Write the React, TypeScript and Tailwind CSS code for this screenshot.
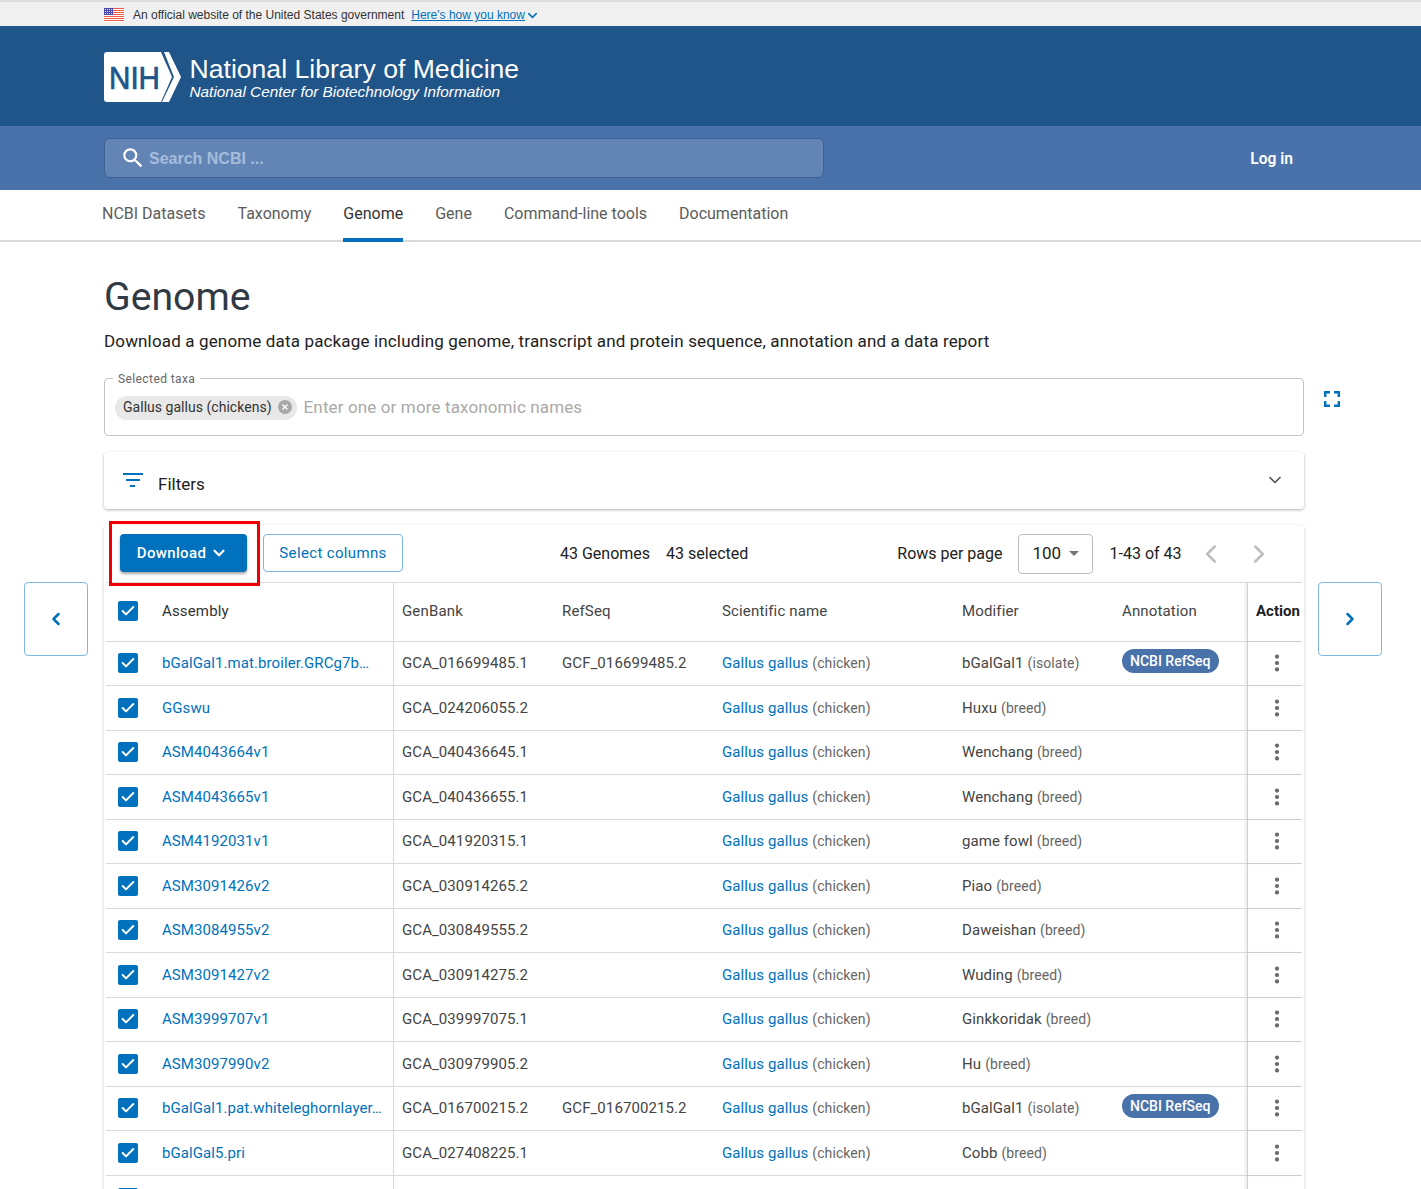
import { ChevronDown, ChevronLeft, ChevronRight, EllipsisVertical, Check } from "lucide-react";

const rows = [
  ["bGalGal1.mat.broiler.GRCg7b…", "GCA_016699485.1", "GCF_016699485.2", "bGalGal1", "(isolate)", true],
  ["GGswu", "GCA_024206055.2", "", "Huxu", "(breed)", false],
  ["ASM4043664v1", "GCA_040436645.1", "", "Wenchang", "(breed)", false],
  ["ASM4043665v1", "GCA_040436655.1", "", "Wenchang", "(breed)", false],
  ["ASM4192031v1", "GCA_041920315.1", "", "game fowl", "(breed)", false],
  ["ASM3091426v2", "GCA_030914265.2", "", "Piao", "(breed)", false],
  ["ASM3084955v2", "GCA_030849555.2", "", "Daweishan", "(breed)", false],
  ["ASM3091427v2", "GCA_030914275.2", "", "Wuding", "(breed)", false],
  ["ASM3999707v1", "GCA_039997075.1", "", "Ginkkoridak", "(breed)", false],
  ["ASM3097990v2", "GCA_030979905.2", "", "Hu", "(breed)", false],
  ["bGalGal1.pat.whiteleghornlayer…", "GCA_016700215.2", "GCF_016700215.2", "bGalGal1", "(isolate)", true],
  ["bGalGal5.pri", "GCA_027408225.1", "", "Cobb", "(breed)", false],
] as const;

const gridCols = "grid grid-cols-[288px_160px_160px_240px_160px_133px_1fr]";

function Box() {
  return (
    <span className="flex h-5 w-5 shrink-0 items-center justify-center rounded-[2px] bg-[#0071bc]">
      <Check size={16} strokeWidth={3} className="text-white" />
    </span>
  );
}

function NihLogo() {
  return (
    <svg width="78" height="50" viewBox="0 0 78 50" className="shrink-0">
      <path d="M3 0H57L68 25L57 50H3Q0 50 0 47V3Q0 0 3 0Z" fill="#fff" />
      <path d="M60 0H65L77 25L65 50H58L70 25Z" fill="#fff" />
      <text x="5" y="37" fontFamily="Liberation Sans, sans-serif" fontSize="31" fill="#20558a" stroke="#20558a" strokeWidth="0.7" textLength="51" lengthAdjust="spacingAndGlyphs">NIH</text>
    </svg>
  );
}

function Flag() {
  return (
    <svg width="20" height="14" viewBox="0 0 20 14">
      <rect width="20" height="14" fill="#fff" />
      {[0, 2, 4, 6, 8, 10, 12].map((y) => (
        <rect key={y} y={y} width="20" height="1" fill="#ee5a45" />
      ))}
      <rect width="9" height="7" fill="#4a4aa8" />
      {[1, 3, 5, 7].map((x) =>
        [1, 3, 5].map((y) => <rect key={`${x}-${y}`} x={x} y={y} width="1" height="1" fill="#d5d5ee" />)
      )}
    </svg>
  );
}

export default function App() {
  return (
    <div className="h-[1189px] w-[1421px] overflow-hidden bg-white font-['Roboto',sans-serif] text-[#212121]">
      <div className="flex h-[26px] items-center border-t-2 border-[#dcdcdc] bg-[#f0f0f0] pl-[104px] pt-[2px] font-['Liberation_Sans',sans-serif] text-xs">
        <Flag />
        <span className="ml-[9px] text-[#333]">An official website of the United States government</span>
        <a className="ml-[7px] text-[#0071bc] underline">Here's how you know</a>
        <ChevronDown size={15} strokeWidth={2.4} className="text-[#0071bc]" />
      </div>

      <header className="flex h-[100px] items-center gap-2 bg-[#20558a] pl-[104px] pt-[1px]">
        <NihLogo />
        <div className="-ml-[0.5px] text-white">
          <div className="font-['Liberation_Sans',sans-serif] text-[26.6px] leading-[30px]">National Library of Medicine</div>
          <div className="-mt-[1px] font-['Liberation_Sans',sans-serif] text-[15.35px] italic leading-[17px]">National Center for Biotechnology Information</div>
        </div>
      </header>

      <div className="flex h-16 items-center justify-between bg-[#4a72aa] pl-[104px] pr-[128px]">
        <div className="flex h-10 w-[720px] items-center gap-[3px] rounded-md border border-[#3d6393] bg-[#6285b5] pl-[15px] font-['Liberation_Sans',sans-serif]">
          <svg width="26" height="26" viewBox="0 0 24 24" fill="#fff">
            <path d="M15.5 14h-.79l-.28-.27A6.471 6.471 0 0 0 16 9.5 6.5 6.5 0 1 0 9.5 16c1.61 0 3.09-.59 4.23-1.57l.27.28v.79l5 4.99L20.49 19l-4.99-5zm-6 0C7.01 14 5 11.99 5 9.5S7.01 5 9.5 5 14 7.01 14 9.5 11.99 14 9.5 14z" />
          </svg>
          <span className="pt-[1px] text-base font-bold text-[#a5bcdb]">Search NCBI ...</span>
        </div>
        <span className="pt-[3px] text-[15.6px] font-semibold text-white">Log in</span>
      </div>

      <nav className="flex h-[52px] gap-8 border-b-2 border-[#d9d9d9] pl-[102px] text-base text-[#5c5c5c]">
        <a className="pt-[12px]">NCBI Datasets</a>
        <a className="pt-[12px]">Taxonomy</a>
        <a className="-mb-[2px] border-b-4 border-[#0071bc] pt-[12px] text-[#333]">Genome</a>
        <a className="pt-[12px]">Gene</a>
        <a className="pt-[12px]">Command-line tools</a>
        <a className="pt-[12px]">Documentation</a>
      </nav>

      <main className="flex">
        <div className="w-[104px] pl-6 pt-[340px]">
          <button className="flex h-[74px] w-16 items-center justify-center rounded-[4px] border border-[#7db8e0] text-[#0071bc]">
            <ChevronLeft size={20} strokeWidth={3} />
          </button>
        </div>

        <div className="w-[1200px]">
          <h1 className="pt-[31px] text-[39.2px] leading-[48px] text-[#2f3a45]">Genome</h1>
          <p className="mt-[8px] text-[17px] leading-[24px] tracking-[0.15px]">Download a genome data package including genome, transcript and protein sequence, annotation and a data report</p>

          <fieldset className="mt-[18px] h-[65px] rounded-[4px] border border-[#c4c4c4] pl-[10px]">
            <legend className="-ml-[2px] px-[5px] pt-[2px] text-xs leading-3 tracking-[0.4px] text-[#666]">Selected taxa</legend>
            <div className="mt-[10px] flex items-center gap-[7px]">
              <span className="flex h-6 items-center gap-[6px] rounded-full bg-[#e8e8e8] pb-[1px] pl-2 pr-[5px] text-sm tracking-[0.03px] text-[#333]">
                Gallus gallus (chickens)
                <svg width="14" height="14" viewBox="0 0 14 14">
                  <circle cx="7" cy="7" r="7" fill="#a8a8a8" />
                  <path d="M4.5 4.5L9.5 9.5M9.5 4.5L4.5 9.5" stroke="#fff" strokeWidth="1.4" />
                </svg>
              </span>
              <span className="text-[17px] tracking-[0.13px] text-[#a9a9a9]">Enter one or more taxonomic names</span>
            </div>
          </fieldset>

          <div className="mt-4 flex h-[57px] items-center rounded-[4px] pl-[19px] pr-[19px] shadow-[0_1px_3px_rgba(0,0,0,0.3)]">
            <svg width="20" height="14" viewBox="0 0 20 14" className="mb-[2px]">
              <rect width="20" height="2" fill="#0071bc" />
              <rect x="3" y="6" width="14" height="2" fill="#0071bc" />
              <rect x="7" y="12" width="5" height="2" fill="#0071bc" />
            </svg>
            <span className="ml-[15px] mt-[8px] flex-1 text-[17px]">Filters</span>
            <ChevronDown size={20} className="mb-[2px] text-[#555]" />
          </div>

          <section className="relative mt-4 rounded-t-[4px] px-[2px] shadow-[0_1px_3px_rgba(0,0,0,0.25)]">
            <div className="flex h-[58px] items-center border-b border-[#dcdcdc] pl-[14px]">
              <button className="mb-[1px] flex h-[38px] w-[127px] items-center justify-center gap-[4px] rounded-[4px] bg-[#0071bc] pr-[2px] text-[15px] font-medium tracking-[0.35px] text-white shadow-[0_2px_3px_rgba(0,0,0,0.35)]">
                Download
                <ChevronDown size={18} strokeWidth={3} />
              </button>
              <button className="mb-[1px] ml-4 h-[38px] w-[140px] rounded-[4px] border border-[#7db8e0] text-[15px] tracking-[0.35px] text-[#0071bc]">Select columns</button>
              <span className="ml-[157px] text-base">43 Genomes</span>
              <span className="ml-4 text-base">43 selected</span>
              <span className="ml-[149px] text-base">Rows per page</span>
              <div className="ml-[15px] flex h-10 w-[75px] items-center rounded-[4px] border border-[#bdbdbd] pl-[14px] text-[17px]">
                100
                <span className="ml-2 h-0 w-0 border-x-[5px] border-t-[5px] border-x-transparent border-t-[#757575]" />
              </div>
              <span className="ml-[17px] text-base">1-43 of 43</span>
              <ChevronLeft size={30} strokeWidth={2} className="ml-[14px] text-[#bdbdbd]" />
              <ChevronRight size={30} strokeWidth={2} className="ml-[18px] text-[#bdbdbd]" />
            </div>

            <div className={`${gridCols} h-[58.5px] items-stretch border-b border-[#d9d9d9] text-[15px] tracking-[0.15px] text-[#444]`}>
              <div className="flex items-center gap-[24px] border-r border-[#d9d9d9] pb-[1px] pl-3">
                <Box />
                <span className="text-[#333]">Assembly</span>
              </div>
              <div className="flex items-center pb-[1px] pl-2">GenBank</div>
              <div className="flex items-center pb-[1px] pl-2">RefSeq</div>
              <div className="flex items-center pb-[1px] pl-2">Scientific name</div>
              <div className="flex items-center pb-[1px] pl-2">Modifier</div>
              <div className="flex items-center pb-[1px] pl-2">Annotation</div>
              <div className="flex items-center border-l border-[#d0d0d0] pb-[1px] pl-2 font-bold tracking-normal text-[#212121] shadow-[-2px_0_3px_rgba(0,0,0,0.08)]">Action</div>
            </div>

            {rows.map((r) => (
              <div key={r[1]} className={`${gridCols} h-[44.5px] border-b border-[#d9d9d9] text-[15px] tracking-[0.08px] text-[#444]`}>
                <div className="flex items-center gap-[24px] border-r border-[#d9d9d9] pl-3">
                  <Box />
                  <a className="whitespace-nowrap text-[#0071bc]">{r[0]}</a>
                </div>
                <div className="flex items-center pl-2">{r[1]}</div>
                <div className="flex items-center pl-2">{r[2]}</div>
                <div className="flex items-center pl-2">
                  <span>
                    <a className="text-[#0071bc]">Gallus gallus</a>
                    <span className="ml-1 text-[14px] text-[#666]">(chicken)</span>
                  </span>
                </div>
                <div className="flex items-center pl-2">
                  <span>
                    {r[3]}
                    <span className="ml-1 text-[14px] text-[#666]">{r[4]}</span>
                  </span>
                </div>
                <div className="flex items-center pl-2">
                  {r[5] && (
                    <span className="mb-[4px] rounded-full bg-[#4a72aa] px-2 py-[2px] text-sm font-medium tracking-normal text-white">NCBI RefSeq</span>
                  )}
                </div>
                <div className="flex items-center border-l border-[#d0d0d0] pl-[18px] text-[#666] shadow-[-2px_0_3px_rgba(0,0,0,0.08)]">
                  <EllipsisVertical size={22} strokeWidth={2.6} />
                </div>
              </div>
            ))}

            {/* next row is cut off by the window, only the checkbox top shows */}
            <div className={`${gridCols} h-[44.5px]`}>
              <div className="flex items-center border-r border-[#d9d9d9] pl-3">
                <Box />
              </div>
              <div className="col-start-7 border-l border-[#d0d0d0] shadow-[-2px_0_3px_rgba(0,0,0,0.08)]" />
            </div>

            <div className="absolute left-[5px] top-[-4px] h-[65px] w-[151px] border-[3px] border-[#f00000]" />
          </section>
        </div>

        <div className="flex-1 pl-[15px]">
          <div className="h-[274px] pl-[5px] pt-[149px]">
            <svg width="16" height="16" viewBox="0 0 16 16" fill="none" stroke="#0071bc" strokeWidth="2.4">
              <path d="M1.2 6V1.2H6M10 1.2H14.8V6M14.8 10V14.8H10M6 14.8H1.2V10" />
            </svg>
          </div>
          <button className="mt-[66px] -ml-px flex h-[74px] w-16 items-center justify-center rounded-[4px] border border-[#7db8e0] text-[#0071bc]">
            <ChevronRight size={20} strokeWidth={3} />
          </button>
        </div>
      </main>
    </div>
  );
}
